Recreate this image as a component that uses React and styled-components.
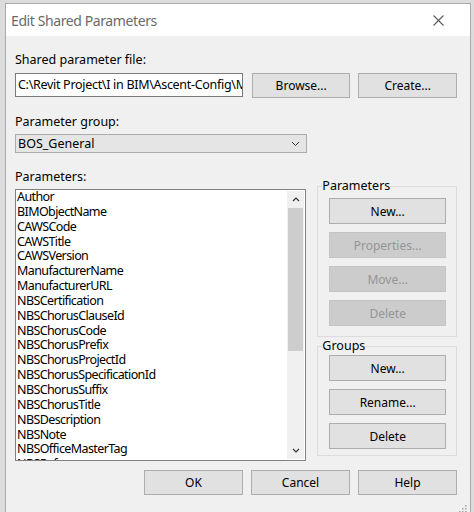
import React from "react";
import styled, { createGlobalStyle } from "styled-components";

const GlobalStyle = createGlobalStyle`
  html, body {
    margin: 0;
    padding: 0;
    background: #dcdcdc;
    overflow: hidden;
  }
  body {
    font-family: "Noto Sans", "Open Sans", sans-serif;
    font-size: 12px;
    color: #000;
  }
`;

const parameters = [
  "Author",
  "BIMObjectName",
  "CAWSCode",
  "CAWSTitle",
  "CAWSVersion",
  "ManufacturerName",
  "ManufacturerURL",
  "NBSCertification",
  "NBSChorusClauseId",
  "NBSChorusCode",
  "NBSChorusPrefix",
  "NBSChorusProjectId",
  "NBSChorusSpecificationId",
  "NBSChorusSuffix",
  "NBSChorusTitle",
  "NBSDescription",
  "NBSNote",
  "NBSOfficeMasterTag",
  "NBSReference",
];

function App() {
  return (
    <>
      <GlobalStyle />
      <Window>
        <TitleBar>
          <Title>Edit Shared Parameters</Title>
          <CloseButton>
            <svg width="11" height="11" viewBox="0 0 11 11">
              <path d="M0.5 0.5 L10.5 10.5 M10.5 0.5 L0.5 10.5" stroke="#5a5a5a" strokeWidth="1.1" />
            </svg>
          </CloseButton>
        </TitleBar>
        <Body>
          <Label>Shared parameter file:</Label>
          <FileRow>
            <TextField>C:\Revit Project\I in BIM\Ascent-Config\Metric Shared Parameters.txt</TextField>
            <Button>Browse...</Button>
            <Button>Create...</Button>
          </FileRow>
          <Label $top={16}>Parameter group:</Label>
          <Select>
            <span>BOS_General</span>
            <svg width="9" height="6" viewBox="0 0 9 6">
              <path d="M1 1 L4.5 4.5 L8 1" fill="none" stroke="#333" strokeWidth="1" />
            </svg>
          </Select>
          <Columns>
            <LeftColumn>
              <Label>Parameters:</Label>
              <ListBox>
                <Items>
                  {parameters.map((p) => (
                    <Item key={p}>{p}</Item>
                  ))}
                </Items>
                <ScrollBar>
                  <Arrow>
                    <svg width="8" height="5" viewBox="0 0 8 5">
                      <path d="M1 4 L4 1 L7 4" fill="none" stroke="#333" strokeWidth="1.2" />
                    </svg>
                  </Arrow>
                  <Track>
                    <Thumb />
                  </Track>
                  <Arrow>
                    <svg width="8" height="5" viewBox="0 0 8 5">
                      <path d="M1 1 L4 4 L7 1" fill="none" stroke="#333" strokeWidth="1.2" />
                    </svg>
                  </Arrow>
                </ScrollBar>
              </ListBox>
            </LeftColumn>
            <RightColumn>
              <Group $pt={4} $pb={10}>
                <Legend>Parameters</Legend>
                <GroupButton>New...</GroupButton>
                <GroupButton disabled>Properties...</GroupButton>
                <GroupButton disabled>Move...</GroupButton>
                <GroupButton disabled>Delete</GroupButton>
              </Group>
              <Group $pt={1} $pb={6}>
                <Legend>Groups</Legend>
                <GroupButton>New...</GroupButton>
                <GroupButton>Rename...</GroupButton>
                <GroupButton>Delete</GroupButton>
              </Group>
            </RightColumn>
          </Columns>
          <Footer>
            <Button>OK</Button>
            <Button>Cancel</Button>
            <Button>Help</Button>
          </Footer>
        </Body>
        <SizeGrip>
          <svg width="9" height="9" viewBox="0 0 9 9">
            {[
              [7, 1],
              [7, 4],
              [4, 4],
              [7, 7],
              [4, 7],
              [1, 7],
            ].map(([x, y]) => (
              <rect key={`${x}-${y}`} x={x} y={y} width="1.5" height="1.5" fill="#a0a0a0" />
            ))}
          </svg>
        </SizeGrip>
      </Window>
    </>
  );
}

const Window = styled.div`
  position: relative;
  width: 466px;
  height: 520px;
  margin: 3px 0 0 5px;
  border: 1px solid #a9a9a9;
  background: #f0f0f0;
  box-sizing: border-box;
`;

const TitleBar = styled.div`
  height: 32px;
  background: #ffffff;
  display: flex;
  align-items: center;
  justify-content: space-between;
  padding: 0 26px 0 5px;
`;

const Title = styled.div`
  font-size: 14px;
  letter-spacing: -0.4px;
  color: #6a6a6a;
`;

const CloseButton = styled.div`
  display: flex;
  align-items: center;
`;

const Body = styled.div`
  padding: 16px 13px 0 9px;
  display: flex;
  flex-direction: column;
`;

const Label = styled.div`
  font-size: 12.5px;
  line-height: 16px;
  margin-top: ${(p) => p.$top || 0}px;
  margin-bottom: 4px;
  white-space: nowrap;
`;

const FileRow = styled.div`
  display: flex;
  gap: 8px;
  margin-top: 1px;
`;

const TextField = styled.div`
  width: 229px;
  height: 24px;
  box-sizing: border-box;
  border: 1px solid #7a7a7a;
  background: #fff;
  padding: 0 0 0 2px;
  font-size: 12.5px;
  letter-spacing: -0.3px;
  line-height: 22px;
  white-space: nowrap;
  overflow: hidden;
  margin-right: 1px;
`;

const Button = styled.div`
  width: 99px;
  height: 25px;
  box-sizing: border-box;
  border: 1px solid #adadad;
  background: #e1e1e1;
  display: flex;
  align-items: center;
  justify-content: center;
`;

const Select = styled.div`
  width: 292px;
  height: 19px;
  box-sizing: border-box;
  border: 1px solid #acacac;
  background: #e5e5e5;
  display: flex;
  align-items: center;
  justify-content: space-between;
  padding: 0 6px 0 2px;
  font-size: 12.5px;
`;

const Columns = styled.div`
  display: flex;
  gap: 11px;
  margin-top: 16px;
`;

const LeftColumn = styled.div`
  display: flex;
  flex-direction: column;
  width: 292px;
`;

const ListBox = styled.div`
  height: 272px;
  box-sizing: border-box;
  border: 1px solid #828282;
  background: #fff;
  display: flex;
  overflow: hidden;
`;

const Items = styled.div`
  flex: 1;
  padding: 0 0 0 1px;
  overflow: hidden;
`;

const Item = styled.div`
  line-height: 14.85px;
  font-size: 12.5px;
  letter-spacing: -0.6px;
  white-space: nowrap;
`;

const ScrollBar = styled.div`
  width: 17px;
  margin: 1px 1px 1px 0;
  background: #f0f0f0;
  display: flex;
  flex-direction: column;
`;

const Arrow = styled.div`
  height: 17px;
  display: flex;
  align-items: center;
  justify-content: center;
`;

const Track = styled.div`
  flex: 1;
`;

const Thumb = styled.div`
  height: 143px;
  margin: 0 1px;
  background: #cdcdcd;
`;

const RightColumn = styled.div`
  width: 140px;
  display: flex;
  flex-direction: column;
  gap: 1px;
  margin-top: 9px;
`;

const Group = styled.fieldset`
  margin: 0;
  border: 1px solid #dcdcdc;
  padding: ${(p) => p.$pt}px 10px ${(p) => p.$pb}px 11px;
  display: flex;
  flex-direction: column;
  gap: 8px;
  min-width: 0;
`;

const Legend = styled.legend`
  padding: 0;
  margin-left: -7px;
  font-size: 12.5px;
  line-height: 16px;
`;

const GroupButton = styled.div`
  height: 26px;
  box-sizing: border-box;
  border: 1px solid ${(p) => (p.disabled ? "#c4c4c4" : "#adadad")};
  background: ${(p) => (p.disabled ? "#cccccc" : "#e1e1e1")};
  color: ${(p) => (p.disabled ? "#959595" : "#000")};
  display: flex;
  align-items: center;
  justify-content: center;
`;

const Footer = styled.div`
  display: flex;
  justify-content: flex-end;
  gap: 8px;
  margin-top: 9px;
`;

const SizeGrip = styled.div`
  position: absolute;
  right: 3px;
  top: 496px;
`;

export default App;
